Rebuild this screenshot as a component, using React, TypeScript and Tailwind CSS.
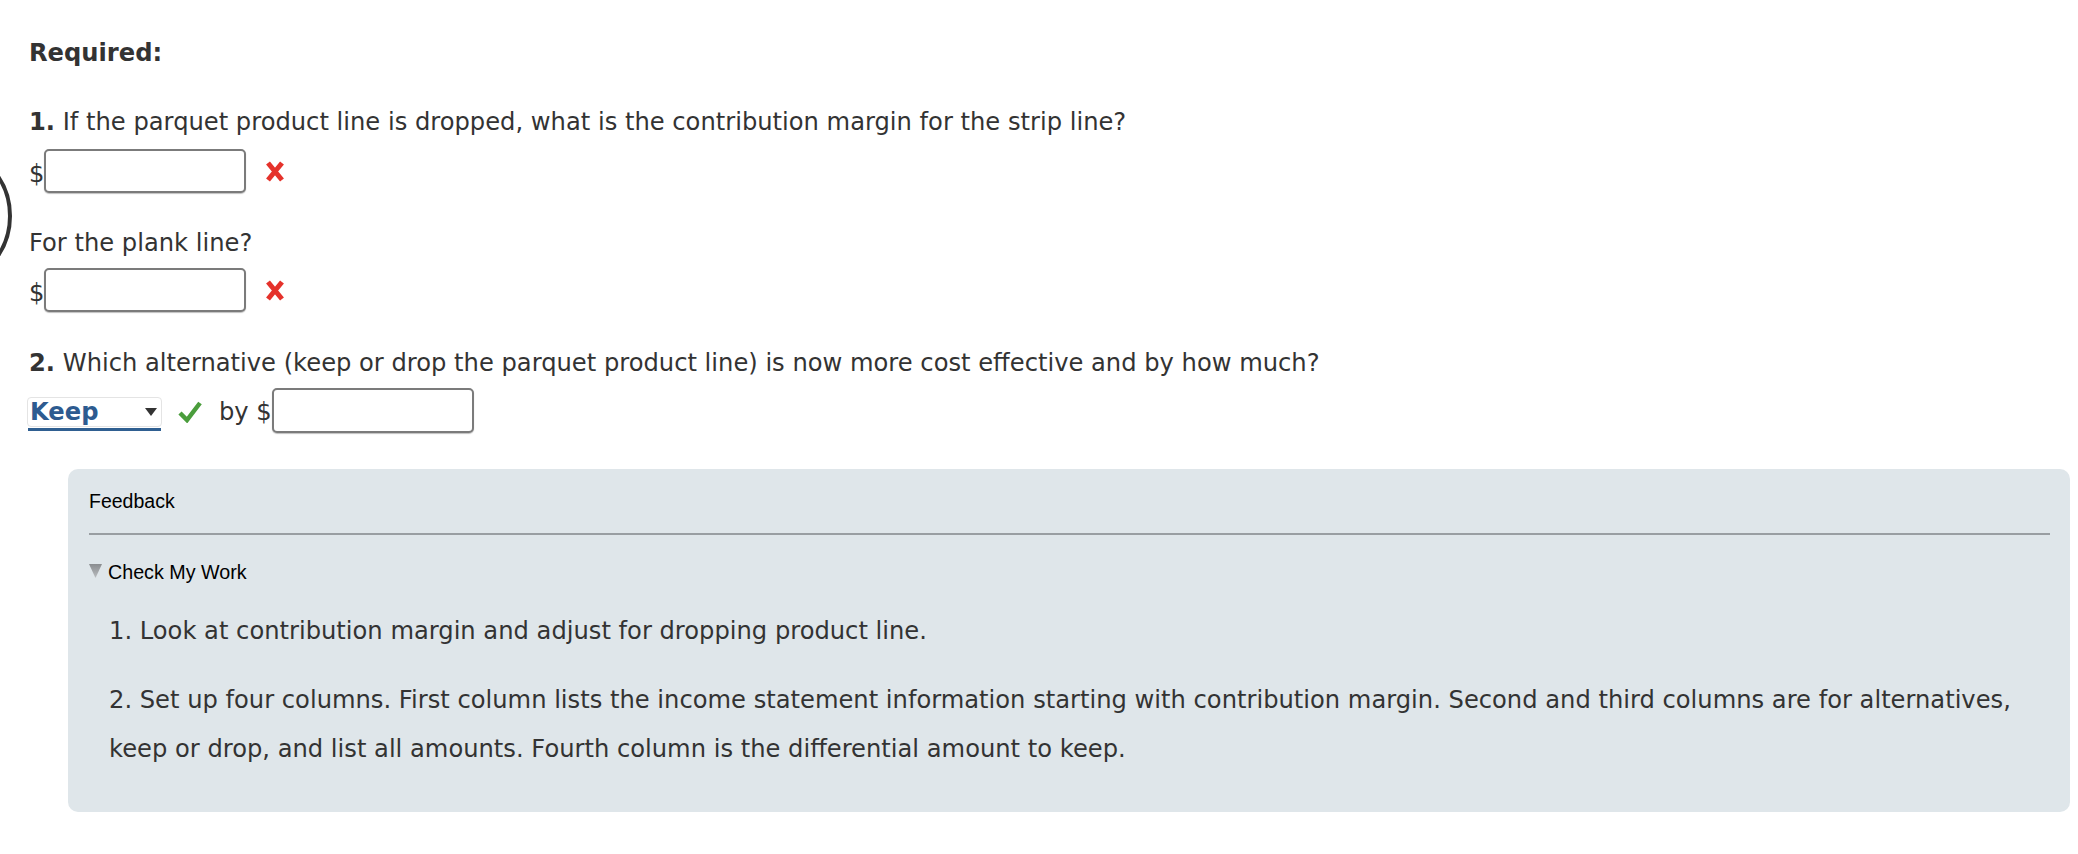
import React from "react"

const verdana = { fontFamily: '"DejaVu Sans", Verdana, sans-serif' }
const arial = { fontFamily: '"Liberation Sans", Arial, sans-serif' }

function WrongMark() {
  return (
    <svg width="20" height="23" viewBox="0 0 20 23" className="ml-[19px]">
      <path d="M3 3 L17 20 M17 3 L3 20" stroke="#e5322b" strokeWidth="5" strokeLinecap="butt" />
    </svg>
  )
}

function AmountInput({ wide = false }: { wide?: boolean }) {
  return (
    <div
      className={`${wide ? "h-[45px]" : "h-[44px]"} w-[202px] rounded-[5px] border-2 border-[#7b7b7b] bg-white shadow-[0_1px_1px_rgba(0,0,0,0.25)]`}
    />
  )
}

export default function App() {
  return (
    <div className="relative min-h-[854px] w-[2078px] overflow-hidden bg-white text-[#333333]" style={verdana}>
      {/* partial circle peeking from the left edge */}
      <div className="absolute left-[-134px] top-[143px] h-[146px] w-[146px] rounded-full border-[4px] border-[#333333]" />

      <div className="pl-[29px] pr-[8px] pt-[39px] text-[24.2px]">
        <p className="font-bold leading-[29px]">Required:</p>

        <p className="mt-[40px] leading-[29px]">
          <span className="font-bold">1.</span> If the parquet product line is dropped, what is the contribution margin for the strip line?
        </p>
        <div className="mt-[12px] flex h-[44px] items-center">
          <span className="mt-[6px] leading-[29px]">$</span>
          <AmountInput />
          <WrongMark />
        </div>

        <p className="mt-[36px] leading-[29px]">For the plank line?</p>
        <div className="mt-[10px] flex h-[44px] items-center">
          <span className="mt-[6px] leading-[29px]">$</span>
          <AmountInput />
          <WrongMark />
        </div>

        <p className="mt-[37px] leading-[29px]">
          <span className="font-bold">2.</span> Which alternative (keep or drop the parquet product line) is now more cost effective and by how much?
        </p>
        <div className="mt-[10px] flex h-[45px] items-center">
          <div className="relative ml-[-2px] mt-[2px] flex h-[30px] w-[135px] items-center rounded-[4px] border border-[#e4e4e4] bg-white pl-[2px]">
            <span className="font-bold leading-[28px] text-[#2d5b90]">Keep</span>
            <svg width="12" height="8" viewBox="0 0 12 8" className="absolute right-[4px] top-[10px]">
              <path d="M0 0 H12 L6 8 Z" fill="#333333" />
            </svg>
            <div className="absolute bottom-[-5px] left-0 right-0 h-[3px] bg-[#2f5f91]" />
          </div>
          <svg width="24" height="22" viewBox="0 0 24 22" className="ml-[16px] mt-[2px]">
            <path d="M2 12 L9 19 L22 2" stroke="#4a9d3c" strokeWidth="4.5" fill="none" strokeLinejoin="miter" />
          </svg>
          <span className="ml-[17px] mt-[4px] leading-[29px]">by $</span>
          <AmountInput wide />
        </div>

        <div className="ml-[39px] mt-[36px] w-[2002px] rounded-[10px] bg-[#dfe6ea] pb-[38px] pl-[21px] pr-[20px] pt-[21px]">
          <p className="text-[19.5px] leading-[22px] text-black" style={arial}>Feedback</p>
          <div className="mt-[21px] h-[2px] bg-[#999ea2]" />
          <div className="mt-[26px] flex items-center text-[19.7px] leading-[22px] text-black" style={arial}>
            <svg width="13" height="14" viewBox="0 0 13 14" className="mr-[6px] mt-[-3px]">
              <defs>
                <linearGradient id="tri" x1="0" y1="0" x2="0" y2="1">
                  <stop offset="0" stopColor="#8a8d90" />
                  <stop offset="1" stopColor="#b9bcbf" />
                </linearGradient>
              </defs>
              <path d="M0 0 H13 L6.5 14 Z" fill="url(#tri)" />
            </svg>
            Check My Work
          </div>
          <div className="pl-[20px] text-[24.2px] text-[#333333]">
            <p className="mt-[24px] leading-[49px]">1. Look at contribution margin and adjust for dropping product line.</p>
            <p className="mt-[20px] leading-[49px]">
              2. Set up four columns. First column lists the income statement information starting with contribution margin. Second and third columns are for alternatives, keep or drop, and list all amounts. Fourth column is the differential amount to keep.
            </p>
          </div>
        </div>
      </div>
    </div>
  )
}
